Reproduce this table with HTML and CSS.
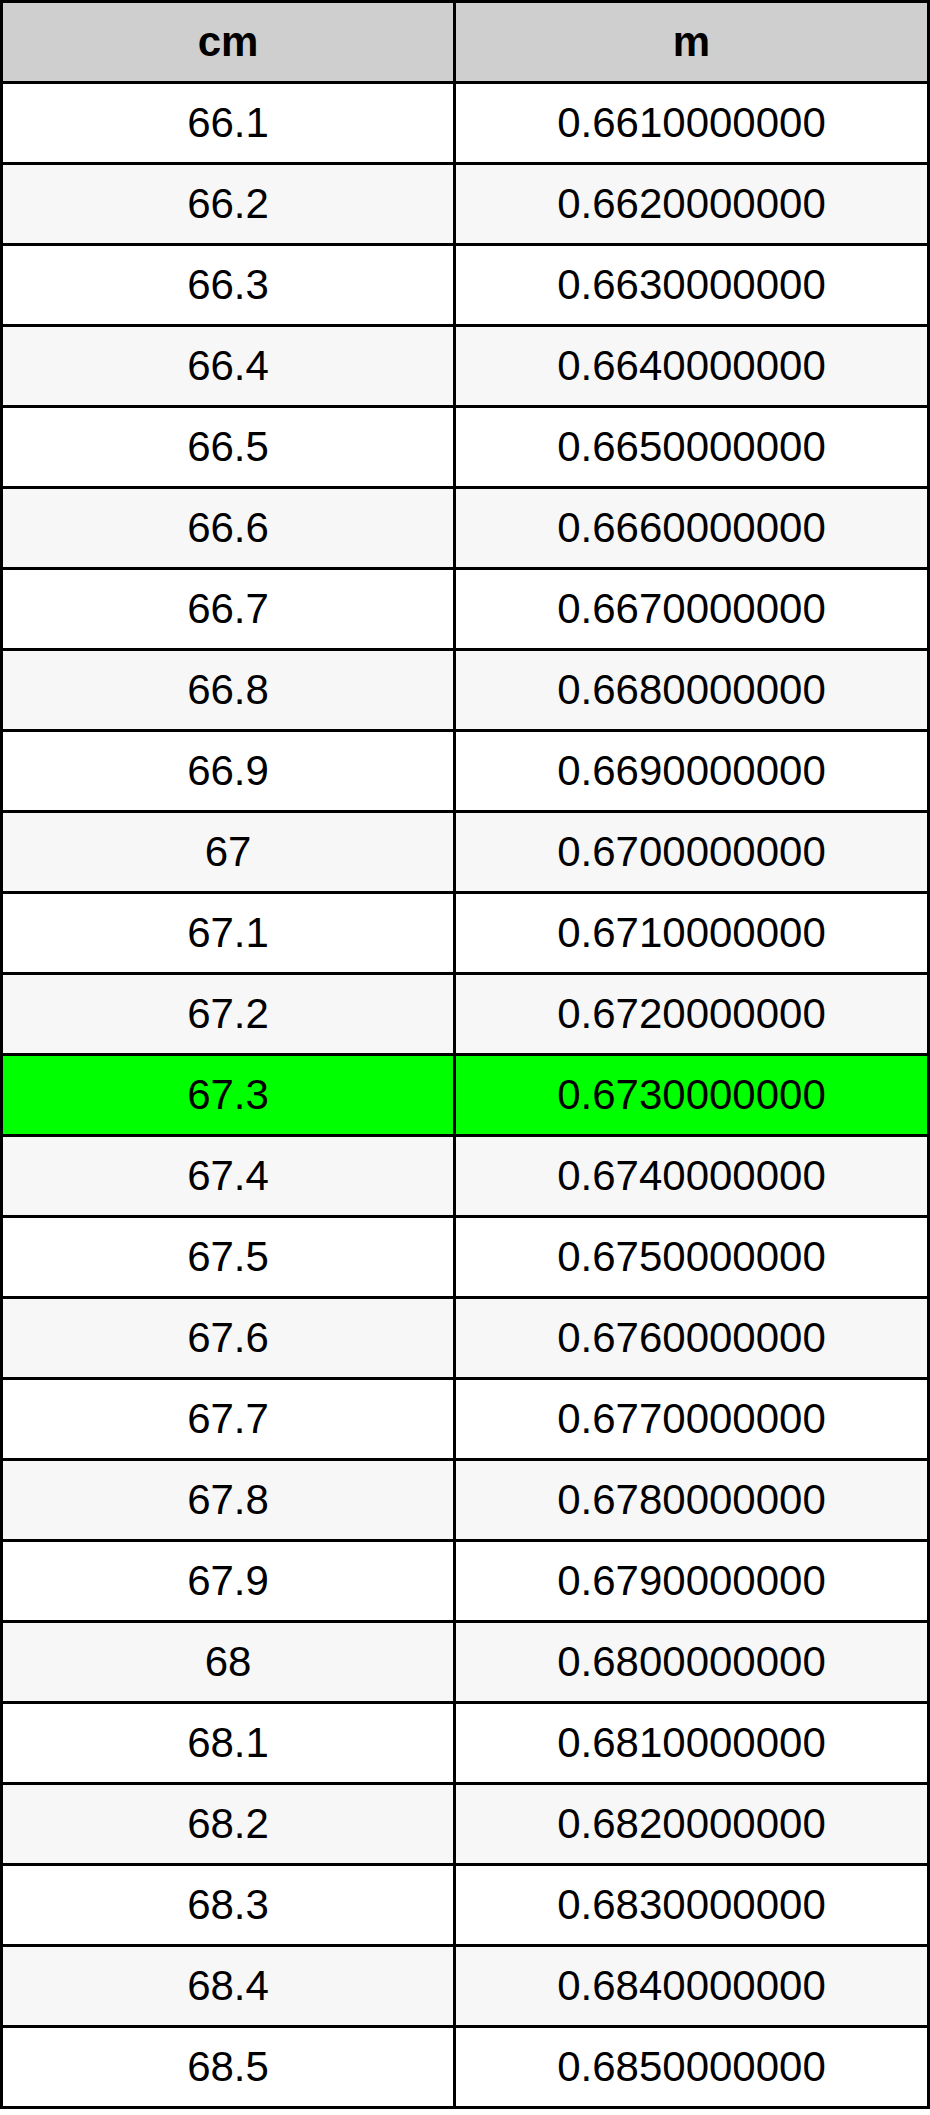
FILE: index.html
```html
<!DOCTYPE html>
<html>
<head>
<meta charset="utf-8">
<link rel="stylesheet" href="styles.css">
</head>
<body>
<div class="table">
  <div class="cell head">cm</div><div class="cell head">m</div>
  <div class="cell">66.1</div><div class="cell">0.6610000000</div>
  <div class="cell alt">66.2</div><div class="cell alt">0.6620000000</div>
  <div class="cell">66.3</div><div class="cell">0.6630000000</div>
  <div class="cell alt">66.4</div><div class="cell alt">0.6640000000</div>
  <div class="cell">66.5</div><div class="cell">0.6650000000</div>
  <div class="cell alt">66.6</div><div class="cell alt">0.6660000000</div>
  <div class="cell">66.7</div><div class="cell">0.6670000000</div>
  <div class="cell alt">66.8</div><div class="cell alt">0.6680000000</div>
  <div class="cell">66.9</div><div class="cell">0.6690000000</div>
  <div class="cell alt">67</div><div class="cell alt">0.6700000000</div>
  <div class="cell">67.1</div><div class="cell">0.6710000000</div>
  <div class="cell alt">67.2</div><div class="cell alt">0.6720000000</div>
  <div class="cell hl">67.3</div><div class="cell hl">0.6730000000</div>
  <div class="cell alt">67.4</div><div class="cell alt">0.6740000000</div>
  <div class="cell">67.5</div><div class="cell">0.6750000000</div>
  <div class="cell alt">67.6</div><div class="cell alt">0.6760000000</div>
  <div class="cell">67.7</div><div class="cell">0.6770000000</div>
  <div class="cell alt">67.8</div><div class="cell alt">0.6780000000</div>
  <div class="cell">67.9</div><div class="cell">0.6790000000</div>
  <div class="cell alt">68</div><div class="cell alt">0.6800000000</div>
  <div class="cell">68.1</div><div class="cell">0.6810000000</div>
  <div class="cell alt">68.2</div><div class="cell alt">0.6820000000</div>
  <div class="cell">68.3</div><div class="cell">0.6830000000</div>
  <div class="cell alt">68.4</div><div class="cell alt">0.6840000000</div>
  <div class="cell">68.5</div><div class="cell">0.6850000000</div>
</div>
</body>
</html>
```

FILE: styles.css
```css
html, body {
  margin: 0;
  padding: 0;
  background: #ffffff;
}
.table {
  display: grid;
  grid-template-columns: 450px 471px;
  grid-auto-rows: 78px;
  gap: 3px;
  padding: 3px;
  width: 930px;
  box-sizing: border-box;
  background: #000000;
  font-family: "Liberation Sans", Arial, sans-serif;
  font-size: 42px;
  color: #000000;
}
.cell {
  background: #ffffff;
  display: flex;
  align-items: center;
  justify-content: center;
}
.cell.alt {
  background: #f7f7f7;
}
.cell.head {
  background: #cfcfcf;
  font-weight: bold;
}
.cell.hl {
  background: #00ff00;
}
```
